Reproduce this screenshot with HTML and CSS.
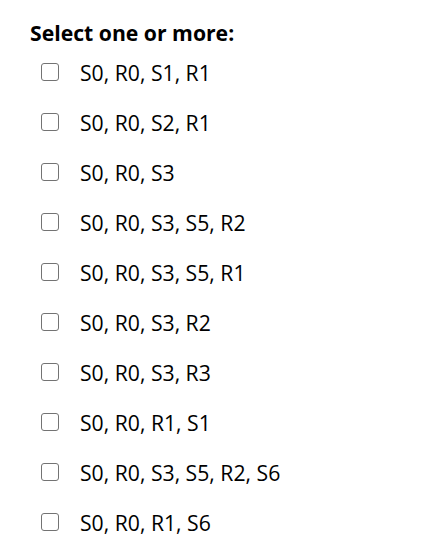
FILE: index.html
```html
<!DOCTYPE html>
<html>
<head>
<meta charset="utf-8">
<link rel="stylesheet" href="styles.css">
</head>
<body>
<div class="question">
  <div class="title">Select one or more:</div>
  <div class="options">
    <label class="option"><input type="checkbox" class="box"><span>S0, R0, S1, R1</span></label>
    <label class="option"><input type="checkbox" class="box"><span>S0, R0, S2, R1</span></label>
    <label class="option"><input type="checkbox" class="box"><span>S0, R0, S3</span></label>
    <label class="option"><input type="checkbox" class="box"><span>S0, R0, S3, S5, R2</span></label>
    <label class="option"><input type="checkbox" class="box"><span>S0, R0, S3, S5, R1</span></label>
    <label class="option"><input type="checkbox" class="box"><span>S0, R0, S3, R2</span></label>
    <label class="option"><input type="checkbox" class="box"><span>S0, R0, S3, R3</span></label>
    <label class="option"><input type="checkbox" class="box"><span>S0, R0, R1, S1</span></label>
    <label class="option"><input type="checkbox" class="box"><span>S0, R0, S3, S5, R2, S6</span></label>
    <label class="option"><input type="checkbox" class="box"><span>S0, R0, R1, S6</span></label>
  </div>
</div>
</body>
</html>
```
FILE: styles.css
```css
html, body {
  margin: 0;
  padding: 0;
  background: #ffffff;
}
body {
  font-family: "Open Sans", "Noto Sans", sans-serif;
  color: #000000;
}
.question {
  padding: 19px 0 0 30px;
}
.title {
  font-size: 21.2px;
  font-weight: 700;
  line-height: 28px;
  color: #000000;
}
.options {
  display: flex;
  flex-direction: column;
}
.option {
  display: flex;
  align-items: center;
  height: 50px;
  padding-left: 11px;
  gap: 21px;
  font-size: 21.2px;
}
.box {
  appearance: none;
  -webkit-appearance: none;
  margin: 0;
  width: 18px;
  height: 18px;
  border: 1.5px solid #737373;
  border-radius: 3px;
  background: #fff;
  box-sizing: border-box;
}
```
